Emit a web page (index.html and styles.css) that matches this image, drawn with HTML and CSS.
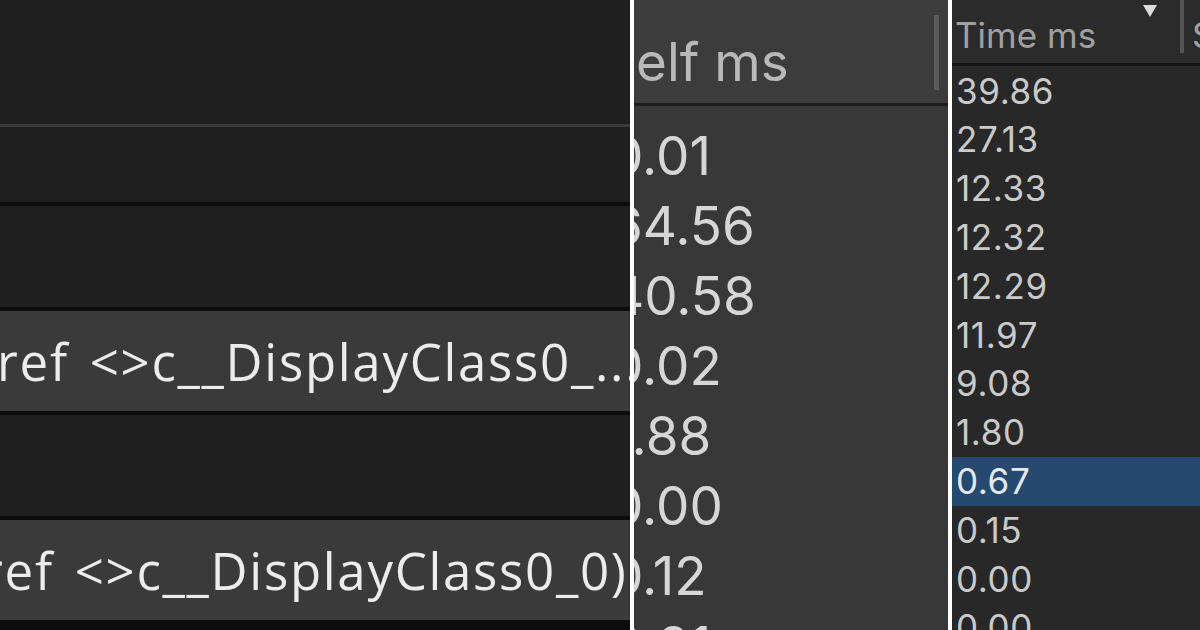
FILE: index.html
```html
<!DOCTYPE html>
<html>
<head>
<meta charset="utf-8">
<link rel="stylesheet" href="styles.css">
</head>
<body>
<div class="stage">
  <section class="pane pane-tree">
    <div class="t-top"></div>
    <div class="t-row t-row-short"></div>
    <div class="t-row"></div>
    <div class="t-row t-row-hl"><span class="t-label t-label-a">ref &lt;&gt;c__DisplayClass0_...</span></div>
    <div class="t-row"></div>
    <div class="t-row t-row-hl"><span class="t-label t-label-b">ref &lt;&gt;c__DisplayClass0_0)</span></div>
  </section>
  <div class="gap"></div>
  <section class="pane pane-self">
    <div class="s-head"><span class="s-title">Self ms</span><span class="s-divider"></span></div>
    <div class="s-body">
      <div class="s-cell">0.01</div>
      <div class="s-cell">64.56</div>
      <div class="s-cell">40.58</div>
      <div class="s-cell">0.02</div>
      <div class="s-cell">1.88</div>
      <div class="s-cell">0.00</div>
      <div class="s-cell">0.12</div>
      <div class="s-cell">0.21</div>
    </div>
  </section>
  <div class="gap"></div>
  <section class="pane pane-time">
    <div class="r-head">
      <span class="r-title">Time ms</span>
      <span class="r-sort"></span>
      <span class="r-divider"></span>
      <span class="r-next">Self ms</span>
    </div>
    <div class="r-body">
      <div class="r-cell">39.86</div>
      <div class="r-cell">27.13</div>
      <div class="r-cell">12.33</div>
      <div class="r-cell">12.32</div>
      <div class="r-cell">12.29</div>
      <div class="r-cell">11.97</div>
      <div class="r-cell">9.08</div>
      <div class="r-cell">1.80</div>
      <div class="r-cell r-cell-sel">0.67</div>
      <div class="r-cell">0.15</div>
      <div class="r-cell">0.00</div>
      <div class="r-cell">0.00</div>
    </div>
  </section>
</div>
</body>
</html>
```

FILE: styles.css
```css
html, body {
  margin: 0;
  padding: 0;
  background: #ffffff;
}
.stage {
  width: 1200px;
  height: 630px;
  display: flex;
  overflow: hidden;
}
.gap {
  width: 4px;
  flex: none;
  background: #ffffff;
}
.pane {
  height: 630px;
  overflow: hidden;
  flex: none;
  display: flex;
  flex-direction: column;
}

/* left: tree view */
.pane-tree {
  width: 630px;
  background: #0c0c0c;
}
.t-top {
  height: 124px;
  flex: none;
  background: #1f1f1f;
  border-bottom: 3px solid #3a3a3a;
}
.t-row {
  flex: none;
  height: 100.5px;
  background: #1f1f1f;
  border-bottom: 4px solid #0c0c0c;
  display: flex;
  align-items: center;
  white-space: nowrap;
  overflow: hidden;
}
.t-row-short {
  height: 75px;
}
.t-row-hl {
  background: #3a3a3a;
}
.t-label {
  font-family: "Open Sans", "Noto Sans", sans-serif;
  font-size: 51px;
  letter-spacing: 1.7px;
  word-spacing: 6px;
  line-height: 96px;
  color: #ececec;
}
.t-label-a {
  margin-left: -3px;
}
.t-label-b {
  margin-left: -18px;
}

/* middle: Self ms column */
.pane-self {
  width: 314px;
  background: #383838;
  font-family: Inter, Roboto, sans-serif;
}
.s-head {
  flex: none;
  height: 103px;
  background: #3c3c3c;
  border-bottom: 3px solid #1c1c1c;
  display: flex;
  align-items: flex-start;
  position: relative;
}
.s-title {
  margin-left: -32px;
  margin-top: 30px;
  font-size: 53px;
  line-height: 64px;
  color: #b9b9b9;
  white-space: nowrap;
}
.s-divider {
  position: absolute;
  left: 300px;
  top: 15px;
  width: 5px;
  height: 75px;
  background: #5c5c5c;
}
.s-body {
  padding-top: 15px;
}
.s-cell {
  height: 70px;
  line-height: 70px;
  font-size: 53px;
  color: #d6d6d6;
  margin-left: -24px;
  white-space: nowrap;
}

/* right: Time ms column */
.pane-time {
  width: 248px;
  background: #282828;
  font-family: Inter, Roboto, sans-serif;
}
.r-head {
  flex: none;
  height: 63px;
  background: #2b2b2b;
  border-bottom: 3px solid #141414;
  display: flex;
  align-items: flex-start;
  position: relative;
  white-space: nowrap;
}
.r-title {
  margin-left: 3px;
  margin-top: 14px;
  font-size: 35px;
  line-height: 42px;
  color: #a0a0a0;
}
.r-sort {
  position: absolute;
  left: 191px;
  top: 5px;
  width: 0;
  height: 0;
  border-left: 7px solid transparent;
  border-right: 7px solid transparent;
  border-top: 12px solid #dcdcdc;
}
.r-divider {
  position: absolute;
  left: 228px;
  top: 0;
  width: 4px;
  height: 53px;
  background: #545454;
}
.r-next {
  position: absolute;
  left: 240px;
  top: 14px;
  font-size: 35px;
  line-height: 42px;
  color: #a0a0a0;
}
.r-body {
  padding-top: 0.6px;
}
.r-cell {
  height: 48.8px;
  line-height: 48px;
  font-size: 35px;
  letter-spacing: 0.6px;
  color: #cacaca;
  padding-left: 4px;
  white-space: nowrap;
}
.r-cell-sel {
  background: #25496f;
  color: #e4eaf0;
}
```
